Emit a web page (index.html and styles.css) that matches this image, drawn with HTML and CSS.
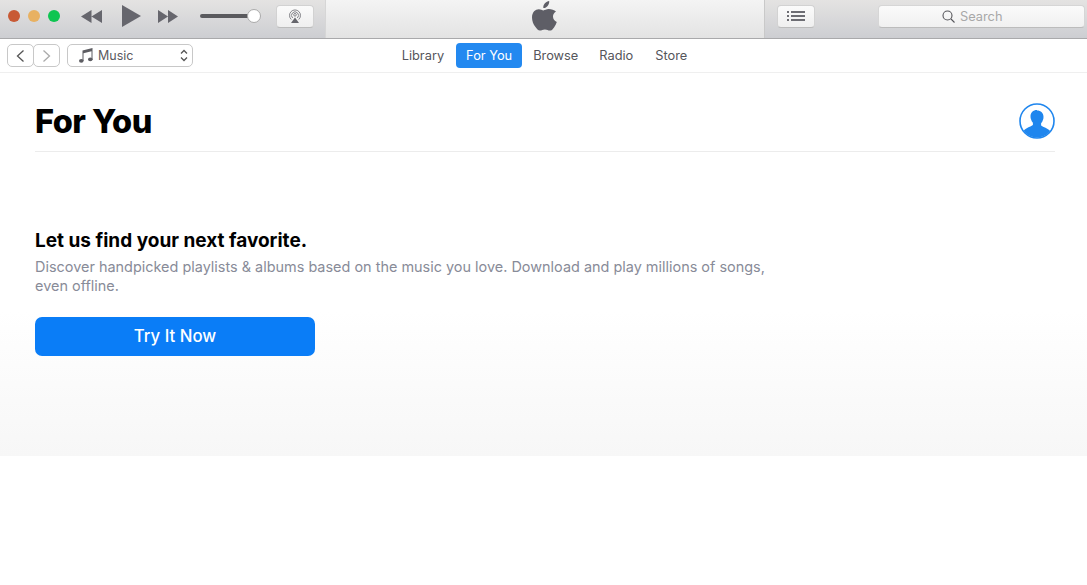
FILE: index.html
```html
<!DOCTYPE html>
<html lang="en">
<head>
<meta charset="utf-8">
<title>For You</title>
<link rel="stylesheet" href="styles.css">
</head>
<body>
<div class="titlebar">
  <div class="tb-left">
    <div class="lights"><span class="light red"></span><span class="light yellow"></span><span class="light green"></span></div>
    <div class="transport">
      <svg class="ic-rw" width="21" height="13" viewBox="0 0 21 13"><path d="M10.500 0v13L0 6.500zM21 0v13L10.500 6.500z"/></svg>
      <svg class="ic-play" width="19" height="22" viewBox="0 0 19 22"><path d="M0 0l19 11L0 22z"/></svg>
      <svg class="ic-ff" width="20" height="13" viewBox="0 0 20 13"><path d="M0 0l10 6.500L0 13zM10 0l10 6.500L10 13z"/></svg>
    </div>
    <div class="volume"><span class="knob"></span></div>
    <button class="tb-btn airplay" aria-label="AirPlay">
      <svg width="16" height="16" viewBox="0 0 16 16" fill="none" stroke="#77777d" stroke-width=".9"><path d="M4.300 11.500a5.500 5.500 0 1 1 7.400 0"/><path d="M5.700 10a3.500 3.500 0 1 1 4.600 0"/><circle cx="8" cy="6.800" r="1.300"/><path d="M8 9.500l4 5.500H4z" fill="#66666c" stroke="none"/></svg>
    </button>
  </div>
  <div class="tb-center">
    <svg class="apple" width="25" height="30" viewBox="0 0 25 30"><path d="M17.200 0c.2 2-.6 3.700-1.600 5-1.100 1.300-2.700 2.200-4.300 2-.2-1.800.6-3.600 1.600-4.700C14 1.100 15.800.2 17.200 0zM24 10.500c-1.900 1.200-3 3-3 5.100 0 2.500 1.400 4.500 3.800 5.500-.6 1.800-1.500 3.500-2.600 5.100-1.300 1.900-2.500 3.400-4.400 3.400-1.800 0-2.500-1.100-4.900-1.100-2.300 0-3.200 1.100-4.900 1.100-1.900 0-3.200-1.700-4.500-3.600C1.400 23.500 0 19.800 0 16.400c0-5.300 3.400-8.200 6.800-8.200 2 0 3.500 1.200 4.700 1.200 1.200 0 2.900-1.300 5.200-1.300 2.800 0 5.600 1 7.300 2.400z"/></svg>
  </div>
  <div class="tb-right">
    <button class="tb-btn list" aria-label="Up next">
      <svg width="18" height="10" viewBox="0 0 18 10" fill="#6d6d73"><path d="M0 0h2v2H0zM0 4h2v2H0zM0 8h2v2H0zM4 0h14v2H4zM4 4h14v2H4zM4 8h14v2H4z"/></svg>
    </button>
    <div class="search">
      <svg width="13" height="13" viewBox="0 0 13 13" fill="none" stroke="#55555a" stroke-width="1.100"><circle cx="5.500" cy="5.500" r="4.500"/><path d="M9 9l3.500 3.500"/></svg>
      <span>Search</span>
    </div>
  </div>
</div>
<nav class="navrow">
  <div class="nav-left">
    <div class="history">
      <button class="hist" aria-label="Back"><svg width="9" height="12" viewBox="0 0 9 12" fill="none" stroke="#555" stroke-width="1.300"><path d="M7.500 .5L1.500 6l6 5.500"/></svg></button>
      <button class="hist" aria-label="Forward"><svg width="9" height="12" viewBox="0 0 9 12" fill="none" stroke="#aaa" stroke-width="1.300"><path d="M1.500 .5L7.500 6l-6 5.500"/></svg></button>
    </div>
    <div class="media">
      <svg width="14" height="15" viewBox="0 0 14 15" fill="#5d5d62"><path d="M3.500 2.500L13.500 0v11.500h-1V3.300l-8 2v7.700h-1z"/><ellipse cx="2.300" cy="12.800" rx="2.300" ry="1.900"/><ellipse cx="11.300" cy="11.300" rx="2.300" ry="1.900"/></svg>
      <span class="media-label">Music</span>
      <svg class="updown" width="8" height="13" viewBox="0 0 8 13" fill="none" stroke="#555" stroke-width="1.300"><path d="M1 4.500L4 1.500l3 3M1 8.500l3 3 3-3"/></svg>
    </div>
  </div>
  <div class="tabs">
    <a class="tab">Library</a>
    <a class="tab active">For You</a>
    <a class="tab">Browse</a>
    <a class="tab">Radio</a>
    <a class="tab store">Store</a>
  </div>
</nav>
<main class="content">
  <header class="page-head">
    <h1>For You</h1>
    <svg class="avatar" width="36" height="36" viewBox="0 0 36 36"><defs><clipPath id="c"><circle cx="18" cy="18" r="16.500"/></clipPath></defs><circle cx="18" cy="18" r="17" fill="#fff" stroke="#1f86ee" stroke-width="1.600"/><g clip-path="url(#c)" fill="#1f86ee"><path d="M18 7.500c3.900 0 6.500 2.700 6.500 6.300 0 1.200-.1 2.200-.5 3-.4 1.500-1 2.600-1.900 3.500v2.200c2 1.700 6.800 2.600 9 5.500V36H5.100l-.2-8.500c2.200-2.900 7-3.800 9-5.500v-2.200c-.9-.9-1.500-2-1.900-3.500-.4-.8-.5-1.800-.5-3 0-3.600 2.600-6.300 6.500-6.300z"/></g></svg>
  </header>
  <section class="promo">
    <h2>Let us find your next favorite.</h2>
    <p>Discover handpicked playlists &amp; albums based on the music you love. Download and play millions of songs, even offline.</p>
    <button class="cta">Try It Now</button>
  </section>
</main>
</body>
</html>
```

FILE: styles.css
```css
* { box-sizing: border-box; }
html, body { margin: 0; height: 100%; overflow: hidden; }
body { background: #fff; font-family: Inter, "Liberation Sans", sans-serif; color: #000; }
button { font-family: inherit; padding: 0; margin: 0; }

.titlebar { display: flex; height: 39px; border-bottom: 1px solid #a9a9ab; background: linear-gradient(#e4e3e2, #cdced2); }
.tb-left { width: 326px; display: flex; align-items: center; padding: 0 0 6px 8px; border-right: 1px solid #d6d6d6; }
.lights { display: flex; gap: 8px; }
.light { width: 12px; height: 12px; border-radius: 50%; }
.red { background: #c85a35; }
.yellow { background: #e8b162; }
.green { background: #0ec551; }
.transport { display: flex; align-items: center; margin-left: 21px; fill: #66666d; }
.ic-play { margin-left: 20px; }
.ic-ff { margin-left: 17px; }
.volume { width: 54px; height: 4px; margin-left: 22px; border-radius: 2px; background: #5a5a5e; position: relative; }
.knob { position: absolute; right: -7px; top: -5px; width: 14px; height: 14px; border-radius: 50%; background: #fff; border: 1px solid #aaa; }
.tb-btn { display: flex; align-items: center; justify-content: center; height: 23px; border: 1px solid #d2d2d2; border-bottom-color: #bcbcbc; border-radius: 4px; background: linear-gradient(#fbfbfb, #efefef); }
.airplay { width: 38px; margin-left: 22px; }
.tb-center { flex: 1; display: flex; justify-content: center; padding: 1px 2px 0 0; background: linear-gradient(#f4f4f4, #e3e3e3); border-right: 1px solid #c9c9c9; }
.apple { fill: #5e5e66; }
.tb-right { width: 322px; display: flex; align-items: center; padding: 0 0 6px 12px; }
.list { width: 38px; }
.search { width: 207px; height: 23px; margin-left: 63px; display: flex; align-items: center; gap: 5px; padding-left: 63px; border: 1px solid #d6d6d6; border-bottom-color: #bcbcbc; border-radius: 4px; background: linear-gradient(#fbfbfb, #f0f0f0); font-size: 12.800px; color: #a8a8a8; }

.navrow { position: relative; display: flex; justify-content: center; align-items: center; height: 34px; padding-left: 2px; border-bottom: 1px solid #efefef; }
.nav-left { position: absolute; left: 7px; top: 5px; display: flex; gap: 7px; }
.history { display: flex; }
.hist { width: 27px; height: 23px; display: flex; align-items: center; justify-content: center; background: #fff; border: 1px solid #c8c8c8; border-radius: 5px; }
.hist + .hist { margin-left: -1px; }
.media { width: 126px; height: 23px; display: flex; align-items: center; padding: 0 4px 0 11px; background: #fff; border: 1px solid #c8c8c8; border-radius: 5px; }
.media-label { flex: 1; margin-left: 5px; font-size: 12.500px; color: #5a5a60; }
.tabs { display: flex; align-items: center; gap: 1px; }
.tab { padding: 0 10px; height: 25px; line-height: 25px; font-size: 12.800px; color: #55555b; border-radius: 4px; }
.active { background: #2389f0; color: #fff; margin-left: 1px; }
.store { margin-left: 1px; }

.content { height: 383px; padding: 0 32px 0 35px; background: linear-gradient(#fff 62%, #f7f7f7 100%); }
.page-head { display: flex; justify-content: space-between; align-items: center; height: 79px; border-bottom: 1px solid #ececec; padding-top: 18px; }
h1 { margin: 2px 0 0; font-size: 32.500px; font-weight: 800; letter-spacing: -0.5px; line-height: 60px; height: 60px; }
.avatar { display: block; margin-top: -1px; }
.promo { padding-top: 77px; }
h2 { margin: 0; font-size: 19px; font-weight: 700; line-height: 24px; }
p { margin: 4px 0 0; width: 740px; font-size: 14.450px; line-height: 19px; color: #888b98; }
.cta { display: block; width: 280px; height: 39px; margin-top: 22px; padding-bottom: 2px; background: #0a7df7; color: #fff; border: 0; border-radius: 7px; font-size: 16.800px; font-weight: 500; }
```
